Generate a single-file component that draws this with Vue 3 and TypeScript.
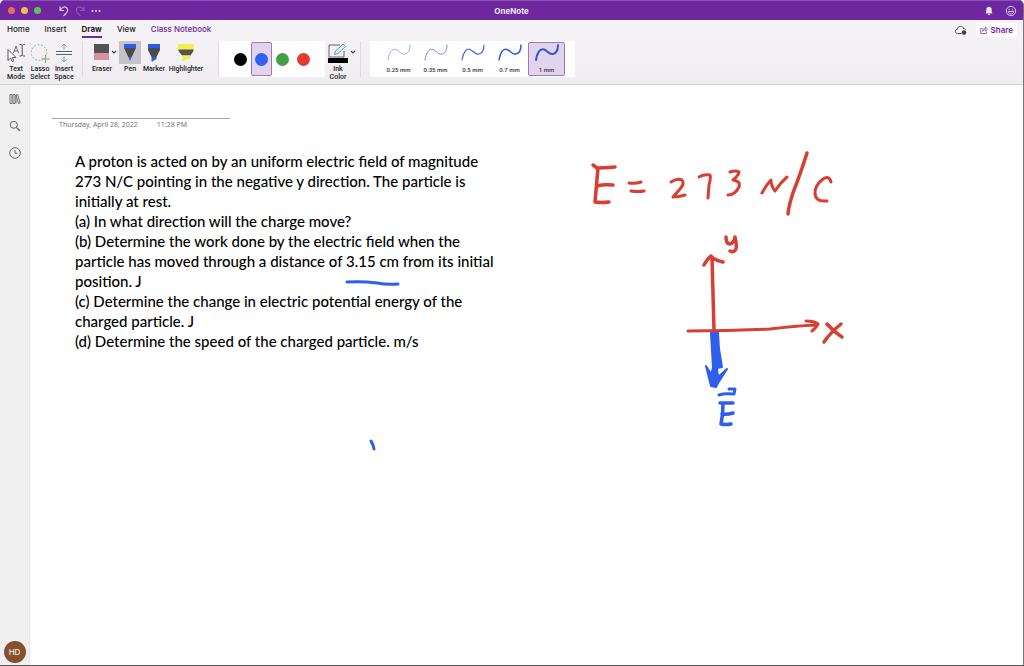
<script setup lang="ts">
import { ref } from 'vue'

interface Swatch { name: string; value: string }
interface Nib { label: string; width: number; opacity: number }

const tabs: string[] = ['Home', 'Insert', 'Draw', 'View', 'Class Notebook']
const activeTab = ref('Draw')

const swatches: Swatch[] = [
  { name: 'Black', value: '#000000' },
  { name: 'Blue', value: '#2f62ee' },
  { name: 'Green', value: '#43a047' },
  { name: 'Red', value: '#e03c31' },
]
const activeSwatch = ref('Blue')

const nibs: Nib[] = [
  { label: '0.25 mm', width: 0.6, opacity: 0.8 },
  { label: '0.35 mm', width: 0.8, opacity: 0.85 },
  { label: '0.5 mm', width: 1.2, opacity: 0.9 },
  { label: '0.7 mm', width: 1.5, opacity: 1 },
  { label: '1 mm', width: 2, opacity: 1 },
]
const activeNib = ref('1 mm')

const problem = `A proton is acted on by an uniform electric field of magnitude
273 N/C pointing in the negative y direction. The particle is
initially at rest.
(a) In what direction will the charge move?
(b) Determine the work done by the electric field when the
particle has moved through a distance of 3.15 cm from its initial
position. J
(c) Determine the change in electric potential energy of the
charged particle. J
(d) Determine the speed of the charged particle. m/s`
</script>

<template>
  <div class="window">
    <header class="titlebar">
      <div class="title-left">
        <button class="light red" aria-label="Close"></button>
        <button class="light yellow" aria-label="Minimize"></button>
        <button class="light green" aria-label="Zoom"></button>
        <button class="bare undo" aria-label="Undo">
          <svg width="10" height="12" viewBox="0 0 10 12"><path d="M1 1.5v4h4M1.2 5.3C3 2 5.500 1.300 7.300 2.500c2 1.500 1.700 4-.3 6L4.500 11" /></svg>
        </button>
        <button class="bare redo" aria-label="Redo">
          <svg width="10" height="12" viewBox="0 0 10 12"><path d="M9 1.500v4H5M8.800 5.300C7 2 4.500 1.300 2.700 2.500c-2 1.500-1.700 4 .3 6L5.500 11" /></svg>
        </button>
        <button class="bare" aria-label="More">
          <svg width="10" height="4" viewBox="0 0 10 4"><g fill="#e9dcf3" stroke="none"><circle cx="1.500" cy="2" r="1" /><circle cx="5" cy="2" r="1" /><circle cx="8.500" cy="2" r="1" /></g></svg>
        </button>
      </div>
      <h1>OneNote</h1>
      <div class="title-right">
        <button class="bare" aria-label="Notifications">
          <svg width="8" height="10" viewBox="0 0 8 10"><path d="M4 .8c-2 0-2.700 1.400-2.700 3v2.100L.5 7.500h7l-.8-1.600V3.800c0-1.600-.7-3-2.700-3zM3 8.200h2c0 1.300-2 1.300-2 0z" fill="#f3eaf9" stroke="none" /></svg>
        </button>
        <button class="bare" aria-label="Feedback">
          <svg width="12" height="12" viewBox="0 0 12 12" class="thin"><circle cx="6" cy="6" r="4.700" /><path d="M4.300 3.800v1.400M7.700 3.800v1.400M3.200 6.500c.5 3.300 5.100 3.300 5.600 0z" /></svg>
        </button>
      </div>
    </header>

    <nav class="tabs" aria-label="Ribbon">
      <button
        v-for="tab in tabs"
        :key="tab"
        class="tab"
        :class="{ active: tab === activeTab, accent: tab === 'Class Notebook' }"
        @click="activeTab = tab"
      >{{ tab }}</button>
      <div class="tabs-end">
        <svg width="14" height="12" viewBox="0 0 14 12" fill="none" stroke="#555" stroke-width="1"><path d="M7.500 9.500H3.600C.6 9.500.6 5.600 3.200 5.400 3.600 1.400 9 1.200 9.600 4.700c1.100 0 1.900.5 2.100 1.300" /><circle cx="10" cy="8.500" r="2.300" fill="#444" stroke="none" /></svg>
        <button class="share">
          <svg width="8" height="8" viewBox="0 0 8 8" fill="none" stroke="#7b3fa8" stroke-width=".8"><path d="M2.500 2.500H.7v5h5.600V5.300M2.500 5.500c.1-2 1.200-3.200 3-3.200V.8l2 2.200-2 2.100V3.700c-1.400 0-2.300.6-3 1.800z" /></svg>
          Share
        </button>
      </div>
    </nav>

    <div class="ribbon">
      <div class="group modes">
        <button class="tool">
          <svg width="20" height="23" viewBox="0 0 20 23" fill="none" stroke="#555"><path d="M2 8.500v11l2.700-2.400 1.500 3.400 1.600-.7-1.500-3.300H10z" fill="#fff" /><path d="M7.500 12l2.500-7 2.500 7M8.300 10h3.400" stroke-width=".8" /><path d="M13.500 3.500h1.500l1.200.8 1.200-.8H19M16.200 4.300v9.800M13.500 15h1.500l1.200-.9 1.200.9H19" /></svg>
          <span>Text<br>Mode</span>
        </button>
        <button class="tool">
          <svg width="20" height="23" viewBox="0 0 20 23" fill="none"><circle cx="9" cy="11.500" r="7.800" stroke="#8fbb98" stroke-dasharray="2 1.500" /><path d="M15.500 14v8M11.500 18h8" stroke="#79a884" /></svg>
          <span>Lasso<br>Select</span>
        </button>
        <button class="tool">
          <svg width="20" height="23" viewBox="0 0 20 23" fill="none"><path d="M2 10.500h16M2 13.500h16" stroke="#57646b" /><path d="M10 8.500V3M7.500 5.500L10 3l2.500 2.500M10 15.500V21M7.500 18.500L10 21l2.500-2.500" stroke="#82a0a6" /></svg>
          <span>Insert<br>Space</span>
        </button>
      </div>

      <div class="group pens">
        <button class="tool">
          <svg width="22" height="23" viewBox="0 0 22 23"><path d="M3 3h15v9H3z" fill="#545254" /><path d="M3 12h15v7H3z" fill="#d4939f" /></svg>
          <span>Eraser</span>
        </button>
        <button class="chevron" aria-label="Eraser options"><svg width="6" height="5" viewBox="0 0 6 5" fill="none" stroke="#444" stroke-width="1.200"><path d="M1 1l2 2 2-2" /></svg></button>
        <button class="tool picked" aria-pressed="true">
          <svg width="22" height="23" viewBox="0 0 22 23"><path d="M5 3h12v4H5z" fill="#2d5be3" /><path d="M5 7h12l-4.300 9H9.300z" fill="#4b4a4d" /><path d="M9.300 16h3.400L11 20z" fill="#2d5be3" /></svg>
          <span>Pen</span>
        </button>
        <button class="tool">
          <svg width="22" height="23" viewBox="0 0 22 23"><path d="M5 3h12v4H5z" fill="#2d5be3" /><path d="M5 7h12v2l-3.500 7h-5L5 9z" fill="#4b4a4d" /><path d="M8.500 16h5v2l-4 2.500h-1z" fill="#2d5be3" /></svg>
          <span>Marker</span>
        </button>
        <button class="tool highlighter">
          <svg width="22" height="23" viewBox="0 0 22 23"><path d="M3 3h16v5H3z" fill="#f1ee54" /><path d="M3.500 8h15v2l-3 4.500H7L3.500 10z" fill="#55534b" /><path d="M3 6.500h16v2H3zM7 14.500h8v3L8 20H7z" fill="#f1ee54" /></svg>
          <span>Highlighter</span>
        </button>
      </div>

      <div class="group colors">
        <div class="well swatches">
          <button
            v-for="s in swatches"
            :key="s.name"
            class="swatch"
            :class="{ picked: s.name === activeSwatch }"
            :aria-label="s.name"
            @click="activeSwatch = s.name"
          ><i :style="{ background: s.value }"></i></button>
        </div>
        <button class="tool">
          <svg width="24" height="23" viewBox="0 0 24 23" fill="none"><path d="M14 4H3v12h15v-6" stroke="#666" /><path d="M8.500 13.500l1-3.500L17 3l2.500 2.500-7.500 7z" fill="#e4f3f5" stroke="#6798a4" /><path d="M2 17h20v5H2z" fill="#000" /></svg>
          <span>Ink<br>Color</span>
        </button>
        <button class="chevron" aria-label="Ink color options"><svg width="6" height="5" viewBox="0 0 6 5" fill="none" stroke="#444" stroke-width="1.200"><path d="M1 1l2 2 2-2" /></svg></button>
      </div>

      <div class="group widths">
        <div class="well nibs">
          <button
            v-for="n in nibs"
            :key="n.label"
            class="nib"
            :class="{ picked: n.label === activeNib }"
            @click="activeNib = n.label"
          >
            <svg width="26" height="20" viewBox="0 0 26 20" fill="none" stroke="#3158cf" :stroke-width="n.width" :opacity="n.opacity" stroke-linecap="round"><path d="M2 17C3 10 6 5 10 6.500C14 8 15 12 19 11C23 10 24 6 24 2" /></svg>
            <span>{{ n.label }}</span>
          </button>
        </div>
      </div>
    </div>

    <div class="workspace">
      <aside class="rail">
        <button class="bare" aria-label="Notebooks">
          <svg width="12" height="12" viewBox="0 0 12 12" fill="none" stroke="#666" stroke-width=".9"><path d="M1 1.500h2v9H1zM4 1.500h2v9H4zM7 2l1.700-.5 2.500 8.500-1.700.5zM7 2v8.500" /></svg>
        </button>
        <button class="bare" aria-label="Search">
          <svg width="12" height="12" viewBox="0 0 12 12" fill="none" stroke="#666"><circle cx="4.800" cy="4.800" r="3.500" /><path d="M7.500 7.500L11 11" stroke-width="1.300" /></svg>
        </button>
        <button class="bare" aria-label="Recent notes">
          <svg width="12" height="12" viewBox="0 0 12 12" fill="none" stroke="#666"><circle cx="6" cy="6" r="5.300" /><path d="M6 3v3.300h2.500" /></svg>
        </button>
        <button class="avatar">HD</button>
      </aside>

      <main class="page">
        <div class="stamp"><span>Thursday, April 28, 2022</span><span>11:28 PM</span></div>
        <p class="problem">{{ problem }}</p>

        <svg class="ink" aria-hidden="true">
          <g transform="translate(-30 -85)" fill="none" stroke-linecap="round" stroke-linejoin="round">
            <g stroke="#d63f31" stroke-width="3">
              <path d="M593 165L597 168Q605 168 615 167M598 168Q597 180 595 202Q602 203 609 202M597 186Q604 184 613 185" stroke-width="3.500" />
              <path d="M629 183Q635 184 641 182M631 191Q638 192 644 191" />
              <path d="M671 182Q677 178 682 180Q685 183 680 189L673 197Q679 197 685 195" />
              <path d="M699 177Q704 174 710 175Q711 178 709 185L708 198" />
              <path d="M730 172Q736 170 739 172Q739 175 733 180Q741 181 739 187Q735 195 728 195" />
              <path d="M762 193Q767 184 771 180Q771 186 775 191Q780 183 787 177" />
              <path d="M807 153Q800 175 794 190Q789 204 788 214" stroke-width="3.500" />
              <path d="M831 182Q829 175 823 179Q815 185 815 193Q815 202 827 201" />
              <path d="M714 330Q713 295 712 257M704 265Q708 258 711 256Q714 260 723 262" stroke-width="3.500" />
              <path d="M688 331Q730 331 770 329Q795 326 815 325M806 321Q814 321 818 324Q816 328 812 331" />
              <path d="M726 237Q726 244 730 244Q734 243 735 237Q737 246 736 249Q734 253 730 251" stroke-width="3.500" />
              <path d="M827 324Q834 332 842 337M841 324Q831 332 824 342" stroke-width="3.500" />
            </g>
            <g stroke="#2d5fea" stroke-width="3">
              <path d="M711 333H718L719 349L722 367L717 368L718 377L727 369L718 383L716 387L711 386L706 366L711 374L713 368Z" fill="#2d5fea" stroke-width="2" />
              <path d="M719 395Q725 393 733 394M729 389L735 389L734 394" />
              <path d="M720 403H733M723 404Q723 415 721 424Q726 425 731 424M722 414Q727 415 733 413" stroke-width="3.500" />
              <path d="M347 282Q362 281 377 283Q387 285 398 284" />
              <path d="M371 441L373 445L374 449" />
            </g>
          </g>
        </svg>
      </main>
    </div>
  </div>
</template>

<style>
body {
  margin: 0;
}
</style>

<style scoped>
.window {
  box-sizing: border-box;
  min-height: 100vh;
  display: flex;
  flex-direction: column;
  border-right: 1px solid #77757a;
  border-bottom: 1px solid #55555a;
  background: #fff;
  border-radius: 5px 5px 0 0;
  overflow: hidden;
  font-family: Inter, "Liberation Sans", sans-serif;
  color: #222;
}
button {
  border: 0;
  padding: 0;
  margin: 0;
  background: none;
  font: inherit;
  color: inherit;
}
svg {
  display: block;
  flex: none;
}
.titlebar {
  display: grid;
  grid-template-columns: 1fr auto 1fr;
  align-items: center;
  height: 20px;
  box-sizing: border-box;
  border-top: 1px solid #8a50b8;
  background: #6e279f;
}
.titlebar h1 {
  margin: 0;
  font-size: 8px;
  line-height: 12px;
  font-weight: 700;
  color: #f0e6f7;
}
.title-left {
  display: flex;
  align-items: center;
  gap: 6px;
  padding-left: 8px;
}
.title-right {
  display: flex;
  align-items: center;
  justify-content: flex-end;
  gap: 12px;
  padding-right: 6px;
}
.titlebar svg {
  fill: none;
  stroke: #d9c4ea;
  stroke-width: 1.2;
}
.titlebar svg.thin {
  stroke-width: 1;
}
.light {
  width: 7px;
  height: 7px;
  border-radius: 50%;
}
.red { background: #ec6a5e; }
.yellow { background: #f4be4f; }
.green { background: #61c454; }
.undo { margin-left: 12px; }
.redo { opacity: 0.3; }
.tabs {
  display: flex;
  align-items: center;
  gap: 15px;
  height: 19px;
  padding: 0 6px 0 7px;
  background: #f4f2f4;
}
.tab {
  height: 17px;
  box-sizing: border-box;
  padding-top: 1px;
  border-bottom: 2px solid transparent;
  font-size: 8px;
  line-height: 14px;
  font-weight: 500;
}
.tab.active {
  font-weight: 700;
  border-color: #6e279f;
}
.tab.accent {
  color: #6e279f;
}
.tabs-end {
  display: flex;
  align-items: center;
  gap: 8px;
  margin-left: auto;
}
.share {
  display: flex;
  align-items: center;
  gap: 3px;
  height: 14px;
  padding: 0 4px;
  border-radius: 2px;
  background: #fff;
  color: #6e279f;
  font-size: 8px;
  font-weight: 600;
}
.ribbon {
  display: flex;
  align-items: flex-start;
  height: 46px;
  box-sizing: border-box;
  padding: 2px 4px 0;
  border-bottom: 1px solid #d2d0d2;
  background: linear-gradient(#f4f2f4, #efedef);
}
.group {
  display: flex;
  align-items: flex-start;
  height: 36px;
}
.group + .group {
  border-left: 1px solid #dddbdd;
}
.tool {
  display: flex;
  flex-direction: column;
  align-items: center;
  width: 24px;
  font-family: Roboto, "Liberation Sans", sans-serif;
  font-size: 7px;
  line-height: 8px;
  font-weight: 500;
  text-align: center;
}
.tool span {
  margin-top: 1px;
  white-space: nowrap;
}
.tool.picked svg {
  background: #c5c3c7;
}
.modes {
  padding-right: 6px;
}
.pens {
  padding: 0 12px 0 7px;
}
.pens .tool.highlighter {
  width: 40px;
}
.chevron {
  display: flex;
  align-items: center;
  height: 23px;
}
.pens .chevron {
  margin: 0 1px 0 -3px;
}
.well {
  display: flex;
  height: 36px;
  background: #fff;
}
.swatches {
  width: 106px;
  justify-content: center;
}
.swatch {
  display: flex;
  align-items: center;
  justify-content: center;
  width: 21px;
  height: 34px;
  margin-top: 1px;
  box-sizing: border-box;
  border: 1px solid transparent;
  border-radius: 2px;
}
.swatch i {
  width: 13px;
  height: 13px;
  flex: none;
  border-radius: 50%;
}
.swatch.picked,
.nib.picked {
  border-color: #9a78bd;
  background: #e1d4ec;
}
.colors {
  padding-right: 4px;
}
.colors .tool {
  margin-left: 1px;
}
.widths {
  padding-left: 9px;
}
.nibs {
  padding: 0 10px;
}
.nib {
  display: flex;
  flex-direction: column;
  align-items: center;
  width: 37px;
  height: 34px;
  margin-top: 1px;
  box-sizing: border-box;
  border: 1px solid transparent;
  border-radius: 2px;
  font-family: Roboto, "Liberation Sans", sans-serif;
  font-size: 6px;
  line-height: 8px;
  font-weight: 500;
  white-space: nowrap;
  color: #333;
}
.nib span {
  margin-top: 3px;
}
.workspace {
  flex: 1;
  display: flex;
}
.rail {
  width: 30px;
  box-sizing: border-box;
  display: flex;
  flex-direction: column;
  align-items: center;
  gap: 15px;
  padding: 8px 0 2px;
  background: #f1f0f1;
  border-right: 1px solid #e8e7e8;
}
.avatar {
  width: 22px;
  height: 22px;
  margin-top: auto;
  border-radius: 50%;
  background: #84502f;
  color: #f6ece6;
  font-size: 8px;
  font-weight: 500;
}
.page {
  position: relative;
  flex: 1;
  padding: 33px 22px;
}
.stamp {
  display: flex;
  gap: 19px;
  width: 178px;
  box-sizing: border-box;
  padding-left: 7px;
  border-top: 1px solid #a5a5a5;
  font-family: "Noto Sans", "Open Sans", sans-serif;
  font-size: 7px;
  line-height: 12px;
  white-space: nowrap;
  color: #767676;
}
.problem {
  margin: 20px 0 0 23px;
  font-family: Lato, "Open Sans", sans-serif;
  font-size: 15px;
  line-height: 20px;
  font-weight: 500;
  white-space: pre-line;
  color: #000;
}
.ink {
  position: absolute;
  top: 0;
  left: 0;
  width: 100%;
  height: 100%;
  pointer-events: none;
}
</style>
